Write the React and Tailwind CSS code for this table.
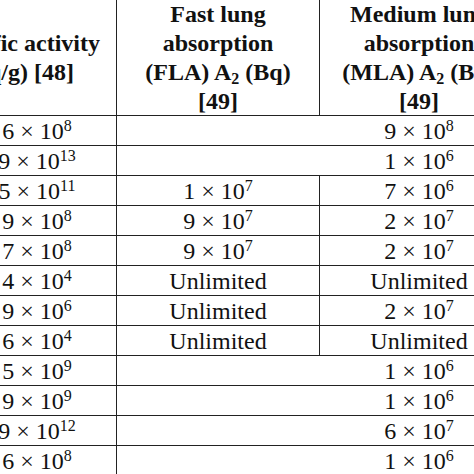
import React from 'react';

const rows = [
  { a: ['6', '8'], fla: null, mla: ['9', '8'] },
  { a: ['9', '13'], fla: null, mla: ['1', '6'] },
  { a: ['5', '11'], fla: ['1', '7'], mla: ['7', '6'] },
  { a: ['9', '8'], fla: ['9', '7'], mla: ['2', '7'] },
  { a: ['7', '8'], fla: ['9', '7'], mla: ['2', '7'] },
  { a: ['4', '4'], fla: 'Unlimited', mla: 'Unlimited' },
  { a: ['9', '6'], fla: 'Unlimited', mla: ['2', '7'] },
  { a: ['6', '4'], fla: 'Unlimited', mla: 'Unlimited' },
  { a: ['5', '9'], fla: null, mla: ['1', '6'] },
  { a: ['9', '9'], fla: null, mla: ['1', '6'] },
  { a: ['9', '12'], fla: null, mla: ['6', '7'] },
  { a: ['6', '8'], fla: null, mla: ['1', '6'] },
];

const Value = ({ v }) => {
  if (v === null) return null;
  if (typeof v === 'string') return <span>{v}</span>;
  return (
    <span className="whitespace-nowrap">
      {v[0]} × 10
      <sup className="text-[16px]">{v[1]}</sup>
    </span>
  );
};

const Sub2 = () => <sub className="text-[16px]">2</sub>;

export default function App() {
  return (
    <div
      className="w-[474px] h-[474px] overflow-hidden bg-white text-[#111]"
      style={{ fontFamily: '"Liberation Serif", "Times New Roman", serif' }}
    >
      <div className="grid grid-cols-[117px_203px_198px] w-[518px] text-[24px]">
        {/* header */}
        <div className="h-[116px] border-r border-b border-[#222] overflow-hidden flex items-center font-bold leading-[29px]">
          <div className="w-[196px] shrink-0 -ml-[79px] text-center">
            Specific activity
            <br />
            (Bq/g) [48]
          </div>
        </div>
        <div className="h-[116px] border-r border-b border-[#222] font-bold leading-[29px] text-center">
          Fast lung
          <br />
          absorption
          <br />
          (FLA) A<Sub2 /> (Bq)
          <br />
          [49]
        </div>
        <div className="h-[116px] border-b border-[#222] font-bold leading-[29px] text-center whitespace-nowrap">
          Medium lung
          <br />
          absorption
          <br />
          (MLA) A<Sub2 /> (Bq)
          <br />
          [49]
        </div>

        {rows.map((r, i) => (
          <React.Fragment key={i}>
            <div className="h-[30px] border-r border-b border-[#222] overflow-hidden flex items-center leading-[26px]">
              <div className="w-[160px] shrink-0 -ml-[43px] text-center">
                <Value v={r.a} />
              </div>
            </div>
            <div
              className={
                r.fla === null
                  ? 'h-[30px] border-b border-[#222] flex items-center justify-center leading-[26px]'
                  : 'h-[30px] border-r border-b border-[#222] flex items-center justify-center leading-[26px]'
              }
            >
              <Value v={r.fla} />
            </div>
            <div className="h-[30px] border-b border-[#222] flex items-center justify-center leading-[26px]">
              <Value v={r.mla} />
            </div>
          </React.Fragment>
        ))}
      </div>
    </div>
  );
}
